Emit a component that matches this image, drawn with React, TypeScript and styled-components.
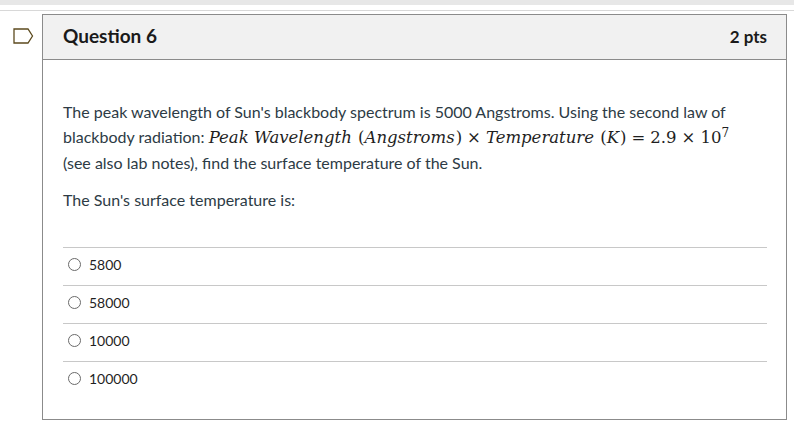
import React from "react";
import styled, { createGlobalStyle } from "styled-components";

const Global = createGlobalStyle`
  html, body { margin: 0; padding: 0; background: #fff; }
  body { font-family: Lato, "Open Sans", sans-serif; color: #2d3b45; }
`;

const TopBand = styled.div`
  height: 5px;
  background: #e7e7e7;
`;

const Divider = styled.div`
  margin-top: 5px;
  height: 1px;
  background: #d8d8d8;
`;

const Page = styled.div`
  display: flex;
  margin-top: 3px;
`;

const Gutter = styled.div`
  width: 42px;
  flex: none;
  display: flex;
  justify-content: flex-start;
  padding-top: 14px;
  padding-left: 13px;
  box-sizing: border-box;
`;

const Card = styled.div`
  width: 745px;
  height: 406px;
  box-sizing: border-box;
  border: 1px solid #8b8b8b;
  display: flex;
  flex-direction: column;
`;

const Header = styled.div`
  height: 44px;
  background: #f1f1f1;
  border-bottom: 1px solid #8b8b8b;
  display: flex;
  align-items: center;
  justify-content: space-between;
  padding: 0 19px 0 20px;
  color: #1a1a1a;
`;

const Title = styled.div`
  font-size: 19px;
  font-weight: 700;
  margin-top: -3px;
`;

const Points = styled.div`
  font-size: 17px;
  font-weight: 700;
  margin-top: -2px;
`;

const Body = styled.div`
  padding: 39px 19px 0 20px;
  font-size: 16px;
  line-height: 25px;
  color: #2d3b45;
`;

const Para = styled.p`
  margin: 0 0 12px 0;
`;

const Math = styled.span`
  font-family: "DejaVu Serif", "Liberation Serif", serif;
  font-size: 16.5px;
  line-height: 25px;
  color: #1f1f1f;
  white-space: nowrap;
`;

const MI = styled.i`
  font-style: italic;
  padding-right: 1px;
`;

const MO = styled.span`
  margin: 0 5px;
`;

const Sup = styled.sup`
  font-size: 12px;
  line-height: 0;
`;

const Answers = styled.div`
  margin-top: 35px;
`;

const Row = styled.div`
  height: 38px;
  box-sizing: border-box;
  padding: 0 0 5px 5px;
  border-top: 1px solid #c8c8c8;
  display: flex;
  align-items: center;
  font-size: 14px;
  color: #1f1f1f;
`;

const Radio = styled.span`
  width: 11px;
  height: 11px;
  border: 1px solid #6a6a6a;
  border-radius: 50%;
  margin-right: 8px;
  margin-top: 1px;
  flex: none;
`;

const Bookmark = () => (
  <svg width="21" height="16" viewBox="0 0 21 16">
    <path d="M1 1 H15 L19.5 8 L15 15 H1 Z" fill="none" stroke="#5c4a1e" strokeWidth="1.3" strokeLinejoin="miter" />
  </svg>
);

const answers = ["5800", "58000", "10000", "100000"];

export default function App() {
  return (
    <>
      <Global />
      <TopBand />
      <Divider />
      <Page>
        <Gutter>
          <Bookmark />
        </Gutter>
        <Card>
          <Header>
            <Title>Question 6</Title>
            <Points>2 pts</Points>
          </Header>
          <Body>
            <Para>
              The peak wavelength of Sun's blackbody spectrum is 5000 Angstroms. Using the second law of
              blackbody radiation:{" "}
              <Math>
                <MI>Peak Wavelength</MI> (<MI>Angstroms</MI>)<MO>×</MO><MI>Temperature</MI> (<MI>K</MI>)
                <MO>=</MO>2.9<MO>×</MO>10<Sup>7</Sup>
              </Math>
              <br />
              (see also lab notes), find the surface temperature of the Sun.
            </Para>
            <Para>The Sun's surface temperature is:</Para>
            <Answers>
              {answers.map((a) => (
                <Row key={a}>
                  <Radio />
                  {a}
                </Row>
              ))}
            </Answers>
          </Body>
        </Card>
      </Page>
    </>
  );
}
